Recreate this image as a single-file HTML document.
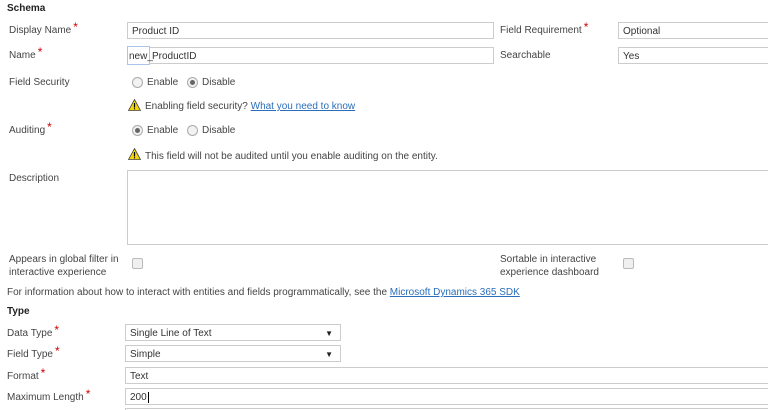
<!DOCTYPE html>
<html><head><meta charset="utf-8"><style>
*{box-sizing:border-box;margin:0;padding:0}
html,body{width:768px;height:410px;overflow:hidden}
body{background:#fff;font-family:"Liberation Sans",sans-serif;font-size:10px;color:#444;position:relative}
.a{position:absolute;white-space:nowrap;line-height:12px}
.b{font-weight:bold;color:#222}
.r{color:#c00;font-size:12px;line-height:0;position:relative;top:-2px;margin-left:2px}
.in{position:absolute;border:1px solid #ccc;background:#fff;height:17px;padding:3px 4px 0;color:#333;line-height:12px}
.rad{position:absolute;width:11px;height:11px;border-radius:50%;border:1px solid #aaa;background:#f2f2f2}
.rad.on::after{content:"";position:absolute;left:2px;top:2px;width:5px;height:5px;border-radius:50%;background:#666}
.cb{position:absolute;width:11px;height:11px;border:1px solid #bbb;border-radius:2px;background:#f0f0f0}
a{color:#2a6ebb;text-decoration:underline}
.tri{position:absolute;right:7px;top:3px;font-size:8px;color:#222}
</style></head><body>
<div class="a b" style="left:7px;top:3px">Schema</div>

<div class="a" style="left:9px;top:25px">Display Name<span class="r">*</span></div>
<div class="in" style="left:127px;top:22px;width:367px">Product ID</div>
<div class="a" style="left:500px;top:25px">Field Requirement<span class="r">*</span></div>
<div class="in" style="left:618px;top:22px;width:160px">Optional</div>

<div class="a" style="left:9px;top:50px">Name<span class="r">*</span></div>
<div class="in" style="left:127px;top:47px;width:367px;padding-left:24px">ProductID</div>
<div class="in" style="left:127px;top:46px;width:23px;height:19px;border-color:#a9c6e8;padding:4px 1px 0">new_</div>
<div class="a" style="left:500px;top:50px">Searchable</div>
<div class="in" style="left:618px;top:47px;width:160px">Yes</div>

<div class="a" style="left:9px;top:77px">Field Security</div>
<div class="rad" style="left:132px;top:77px"></div><div class="a" style="left:147px;top:77px">Enable</div>
<div class="rad on" style="left:187px;top:77px"></div><div class="a" style="left:202px;top:77px">Disable</div>

<svg class="a" style="left:128px;top:99px" width="13" height="12" viewBox="0 0 13 12"><path d="M6.5 0.5 L12.5 11.5 L0.5 11.5 Z" fill="#f5d60a" stroke="#444" stroke-width="0.8"/><rect x="5.9" y="4" width="1.2" height="4.5" fill="#000"/><rect x="5.9" y="9.2" width="1.2" height="1.2" fill="#000"/></svg>
<div class="a" style="left:145px;top:101px">Enabling field security? <a>What you need to know</a></div>

<div class="a" style="left:9px;top:125px">Auditing<span class="r">*</span></div>
<div class="rad on" style="left:132px;top:125px"></div><div class="a" style="left:147px;top:125px">Enable</div>
<div class="rad" style="left:187px;top:125px"></div><div class="a" style="left:202px;top:125px">Disable</div>

<svg class="a" style="left:128px;top:148px" width="13" height="12" viewBox="0 0 13 12"><path d="M6.5 0.5 L12.5 11.5 L0.5 11.5 Z" fill="#f5d60a" stroke="#444" stroke-width="0.8"/><rect x="5.9" y="4" width="1.2" height="4.5" fill="#000"/><rect x="5.9" y="9.2" width="1.2" height="1.2" fill="#000"/></svg>
<div class="a" style="left:145px;top:151px">This field will not be audited until you enable auditing on the entity.</div>

<div class="a" style="left:9px;top:173px">Description</div>
<div class="in" style="left:127px;top:170px;width:660px;height:75px"></div>

<div class="a" style="left:9px;top:253px;line-height:13px">Appears in global filter in<br>interactive experience</div>
<div class="cb" style="left:132px;top:258px"></div>
<div class="a" style="left:500px;top:253px;line-height:13px">Sortable in interactive<br>experience dashboard</div>
<div class="cb" style="left:623px;top:258px"></div>

<div class="a" style="left:7px;top:287px">For information about how to interact with entities and fields programmatically, see the <a>Microsoft Dynamics 365 SDK</a></div>

<div class="a b" style="left:7px;top:306px">Type</div>

<div class="a" style="left:7px;top:328px">Data Type<span class="r">*</span></div>
<div class="in" style="left:125px;top:324px;width:216px">Single Line of Text<span class="tri">▼</span></div>
<div class="a" style="left:7px;top:349px">Field Type<span class="r">*</span></div>
<div class="in" style="left:125px;top:345px;width:216px">Simple<span class="tri">▼</span></div>
<div class="a" style="left:7px;top:371px">Format<span class="r">*</span></div>
<div class="in" style="left:125px;top:367px;width:660px">Text</div>
<div class="a" style="left:7px;top:392px">Maximum Length<span class="r">*</span></div>
<div class="in" style="left:125px;top:388px;width:660px">200<span style="border-left:1px solid #000;margin-left:1px"></span></div>
<div class="in" style="left:125px;top:408px;width:660px;height:2px;padding:0;border-bottom:none"></div>
</body></html>
